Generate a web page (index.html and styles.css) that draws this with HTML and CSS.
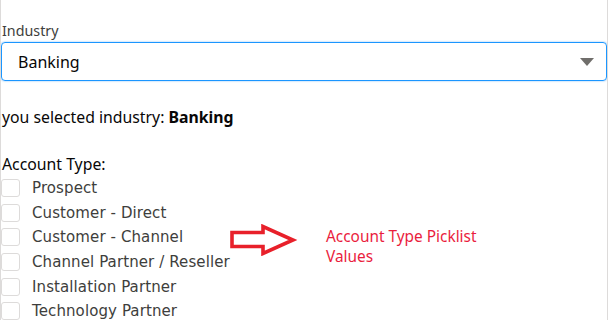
FILE: index.html
```html
<!DOCTYPE html>
<html>
<head>
<meta charset="utf-8">
<link rel="stylesheet" href="styles.css">
</head>
<body>
<div class="frame">
  <div class="field">
    <label class="field-label">Industry</label>
    <div class="select">
      <span class="select-value">Banking</span>
      <svg class="caret" width="14" height="8" viewBox="0 0 14 8"><path d="M0 0H14L7 8Z" fill="#706e6b"/></svg>
    </div>
  </div>
  <p class="selected">you selected industry: <b>Banking</b></p>
  <div class="group">
    <div class="group-title">Account Type:</div>
    <div class="group-body">
      <ul class="checks">
        <li><span class="box"></span><span class="opt">Prospect</span></li>
        <li><span class="box"></span><span class="opt">Customer - Direct</span></li>
        <li><span class="box"></span><span class="opt">Customer - Channel</span></li>
        <li><span class="box"></span><span class="opt">Channel Partner / Reseller</span></li>
        <li><span class="box"></span><span class="opt">Installation Partner</span></li>
        <li><span class="box"></span><span class="opt">Technology Partner</span></li>
      </ul>
      <div class="note">
        <svg class="arrow" width="68" height="32" viewBox="0 0 68 32"><path d="M2 8.5H33V2.5L63 16L33 29.5V22.5H2Z" fill="none" stroke="#e8202a" stroke-width="3.6" stroke-linejoin="miter"/></svg>
        <div class="note-text">Account Type Picklist<br>Values</div>
      </div>
    </div>
  </div>
</div>
</body>
</html>
```
FILE: styles.css
```css
html, body {
  margin: 0;
  padding: 0;
  background: #fff;
}
.frame {
  width: 606px;
  height: 320px;
  border-left: 1px solid #dddbda;
  border-right: 1px solid #dddbda;
  overflow: hidden;
  font-family: "Noto Sans", "Open Sans", sans-serif;
  color: #080707;
}
.field {
  padding-top: 20px;
}
.field-label {
  display: block;
  font-size: 14.3px;
  color: #3e3e3c;
  line-height: 22px;
  padding-left: 1px;
}
.select {
  height: 37px;
  border: 1px solid #1b96ff;
  border-radius: 4px;
  box-shadow: 0 0 2px #79b8f2;
  display: flex;
  align-items: center;
  justify-content: space-between;
  padding: 0 12px 0 16px;
}
.select-value {
  font-size: 16px;
}
.caret {
  display: block;
}
.selected {
  margin: 25px 0 0 1px;
  font-size: 15.8px;
  line-height: 22px;
}
.selected b {
  font-weight: 700;
}
.group-title {
  margin: 25px 0 0 1px;
  font-size: 15.8px;
  line-height: 22px;
  color: #080707;
}
.group-body {
  display: flex;
  align-items: flex-start;
  padding-top: 1px;
}
.checks {
  list-style: none;
  margin: 0;
  padding: 0;
  width: 228px;
  flex: none;
}
.checks li {
  display: flex;
  align-items: center;
  height: 24.6px;
}
.box {
  width: 17px;
  height: 16px;
  border: 1px solid #dddbda;
  border-radius: 3px;
  background: #fff;
  flex: none;
}
.opt {
  margin-left: 12px;
  font-family: "DejaVu Sans", sans-serif;
  font-size: 15px;
  letter-spacing: 0.1px;
  color: #3e3e3c;
  white-space: nowrap;
}
.note {
  display: flex;
  align-items: flex-start;
  margin-top: 48px;
}
.arrow {
  display: block;
  margin-left: 1px;
}
.note-text {
  margin-left: 28px;
  margin-top: 3px;
  font-family: "Noto Sans", sans-serif;
  font-size: 15.4px;
  line-height: 20px;
  color: #ea1d3d;
}
```
